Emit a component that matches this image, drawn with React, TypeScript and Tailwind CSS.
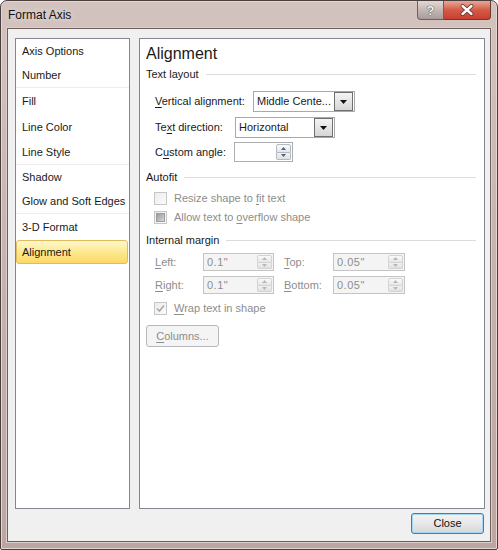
import React from "react";

const DIS = "text-[#8d8d8d]";

function U({ children }: { children: React.ReactNode }) {
  return <span className="underline underline-offset-[2px]">{children}</span>;
}

function Arrow({ dir, color }: { dir: "up" | "down"; color: string }) {
  return (
    <svg width="5" height="3" viewBox="0 0 5 3">
      {dir === "up" ? (
        <path d="M0 3 L2.5 0 L5 3 Z" fill={color} />
      ) : (
        <path d="M0 0 L2.5 3 L5 0 Z" fill={color} />
      )}
    </svg>
  );
}

function SpinBtns({ enabled }: { enabled: boolean }) {
  const arrow = enabled ? "#4d6185" : "#b8b8b8";
  const b = enabled ? "border-[#b4bac2]" : "border-[#d3d3d3]";
  return (
    <div className="flex flex-col w-[15px] h-full">
      <div
        className={`flex-1 flex items-center justify-center border ${b} rounded-t-[2px] bg-linear-to-b from-[#fafafa] to-[#e6e6e6]`}
      >
        <Arrow dir="up" color={arrow} />
      </div>
      <div
        className={`flex-1 flex items-center justify-center border border-t-0 ${b} rounded-b-[2px] bg-linear-to-b from-[#f2f2f2] to-[#e0e0e0]`}
      >
        <Arrow dir="down" color={arrow} />
      </div>
    </div>
  );
}

function SpinInput({ value, w }: { value: string; w: string }) {
  return (
    <div
      className={`flex h-[18px] ${w} border border-[#c4c4c4] bg-[#f4f4f4] items-stretch`}
    >
      <span className={`flex-1 flex items-center pl-[3px] ${DIS} tracking-[0.5px]`}>
        {value}
      </span>
      <div className="py-[1px] pr-[1px]">
        <SpinBtns enabled={false} />
      </div>
    </div>
  );
}

function Dropdown({ text, w }: { text: string; w: string }) {
  return (
    <div className={`flex h-[21px] ${w} border border-[#a9a9a9] bg-white items-stretch`}>
      <span className="flex-1 flex items-center pl-[3px] text-[#1a1a1a] whitespace-nowrap overflow-hidden">
        {text}
      </span>
      <div className="py-[0px] pr-[1px] flex">
        <div className="w-[19px] flex items-center justify-center border border-[#6f6f6f] bg-linear-to-b from-[#f4f4f4] to-[#d6d6d6]">
          <svg width="7" height="4" viewBox="0 0 7 4">
            <path d="M0 0 L7 0 L3.5 4 Z" fill="#111" />
          </svg>
        </div>
      </div>
    </div>
  );
}

function Checkbox({ state }: { state: "empty" | "mixed" | "checked" }) {
  return (
    <div className="w-[13px] h-[13px] border border-[#c6c6c6] bg-linear-to-br from-[#ececec] to-[#fbfbfb] flex items-center justify-center">
      {state === "mixed" && (
        <div className="w-[9px] h-[9px] border border-[#9d9d9d] bg-linear-to-br from-[#9a9a9a] to-[#d8d8d8]" />
      )}
      {state === "checked" && (
        <svg width="9" height="9" viewBox="0 0 9 9">
          <path d="M1 4.5 L3.5 7 L8 1.5" stroke="#a9a9a9" strokeWidth="1.6" fill="none" />
        </svg>
      )}
    </div>
  );
}

function Section({ title, mt }: { title: string; mt: string }) {
  return (
    <div className={`flex items-center h-[16px] ${mt}`}>
      <span className="text-[#1a1a1a]">{title}</span>
      <div className="flex-1 h-px bg-[#dcdcdc] ml-[7px] mr-[3px]" />
    </div>
  );
}

function NavItem({ label, h }: { label: string; h: string }) {
  return (
    <div className={`${h} flex items-center pl-[6px] text-[#1a1a1a]`}>{label}</div>
  );
}

function NavSep() {
  return <div className="h-px mx-0 bg-[#ececec]" />;
}

export default function App() {
  return (
    <div className="w-[498px] h-[550px] font-['Liberation_Sans',Arial,sans-serif] text-[11px] leading-none select-none">
      <div className="relative w-[498px] h-[550px] rounded-t-[7px] rounded-b-[2px] border border-[#4b3f3d] bg-linear-to-b from-[#d3c3bf] via-[#c6b2ae] to-[#bba6a1] shadow-[inset_0_0_0_1px_#e3d8d5]">
        {/* title bar */}
        <div className="h-[27px] flex items-center pl-[7px]">
          <span className="text-[12px] text-[#111] [text-shadow:0_0_6px_#f3ece9]">Format Axis</span>
        </div>
        <div className="absolute top-0 right-[6px] flex h-[19px]">
          <div className="w-[27px] h-full rounded-bl-[4px] border border-t-0 border-[#6d5f5d] bg-linear-to-b from-[#e2d8d6] via-[#c4b8b6] to-[#a89c9a] flex items-center justify-center">
            <span className="text-[13px] font-bold text-[#f4f4f4] [text-shadow:0_0_1px_#3a3a3a,0_0_1px_#3a3a3a]">?</span>
          </div>
          <div className="w-[47px] h-full rounded-br-[4px] border border-t-0 border-l-0 border-[#6b3a33] bg-linear-to-b from-[#e8a797] via-[#d45a48] to-[#c7402f] flex items-center justify-center">
            <svg width="14" height="12" viewBox="0 0 14 12">
              <path d="M2.5 2 L11.5 10 M11.5 2 L2.5 10" stroke="#5a2a22" strokeWidth="3.8" strokeLinecap="round" />
              <path d="M2.5 2 L11.5 10 M11.5 2 L2.5 10" stroke="#ffffff" strokeWidth="2.4" strokeLinecap="round" />
            </svg>
          </div>
        </div>

        {/* client area */}
        <div className="mx-[6px] h-[514px] border border-[#6e5f5c] bg-[#f0f0f0] pt-[9px] pl-[7px] pr-[5px] shadow-[0_0_0_1px_#dcd0cd]">
          <div className="flex h-[471px] gap-[9px]">
            {/* nav */}
            <div className="w-[115px] h-full bg-white border border-[#828790] flex flex-col">
              <NavItem label="Axis Options" h="h-[24px]" />
              <NavItem label="Number" h="h-[24px]" />
              <NavSep />
              <NavItem label="Fill" h="h-[26px]" />
              <NavItem label="Line Color" h="h-[26px]" />
              <NavItem label="Line Style" h="h-[24px]" />
              <NavSep />
              <NavItem label="Shadow" h="h-[24px]" />
              <NavItem label="Glow and Soft Edges" h="h-[24px]" />
              <NavSep />
              <NavItem label="3-D Format" h="h-[26px]" />
              <div className="h-[24px] mr-[1px] rounded-[3px] border border-[#e0bd5a] bg-linear-to-b from-[#fff8cc] via-[#fde88e] to-[#fcd964] flex items-center pl-[5px] text-[#1a1a1a]">
                Alignment
              </div>
            </div>

            {/* panel */}
            <div className="w-[346px] h-full bg-white border border-[#828790] flex flex-col pl-[6px] pr-[5px]">
              <div className="h-[20px] mt-[5px] flex items-center text-[16px] text-[#1a1a1a]">
                Alignment
              </div>
              <Section title="Text layout" mt="mt-[2px]" />

              <div className="flex items-center h-[21px] mt-[9px] pl-[9px]">
                <span className="w-[98px] text-[#1a1a1a]">
                  <U>V</U>ertical alignment:
                </span>
                <Dropdown text="Middle Cente..." w="w-[102px]" />
              </div>

              <div className="flex items-center h-[21px] mt-[5px] pl-[9px]">
                <span className="w-[80px] text-[#1a1a1a]">
                  Te<U>x</U>t direction:
                </span>
                <Dropdown text="Horizontal" w="w-[100px]" />
              </div>

              <div className="flex items-center h-[20px] mt-[4px] pl-[9px]">
                <span className="w-[79px] text-[#1a1a1a]">
                  C<U>u</U>stom angle:
                </span>
                <div className="flex h-[20px] w-[59px] border border-[#abadb3] bg-white items-stretch">
                  <span className="flex-1" />
                  <div className="py-[1px] pr-[1px]">
                    <SpinBtns enabled={true} />
                  </div>
                </div>
              </div>

              <Section title="Autofit" mt="mt-[7px]" />

              <div className={`flex items-center h-[16px] mt-[5px] pl-[8px] gap-[7px] ${DIS}`}>
                <Checkbox state="empty" />
                <span>
                  Resize shape to <U>f</U>it text
                </span>
              </div>
              <div className={`flex items-center h-[16px] mt-[3px] pl-[8px] gap-[7px] ${DIS}`}>
                <Checkbox state="mixed" />
                <span>
                  Allow text to <U>o</U>verflow shape
                </span>
              </div>

              <Section title="Internal margin" mt="mt-[7px]" />

              <div className={`flex items-center h-[18px] mt-[5px] pl-[9px] ${DIS}`}>
                <span className="w-[48px]">
                  <U>L</U>eft:
                </span>
                <SpinInput value={'0.1"'} w="w-[71px]" />
                <span className="w-[49px] ml-[10px]">
                  <U>T</U>op:
                </span>
                <SpinInput value={'0.05"'} w="w-[72px]" />
              </div>
              <div className={`flex items-center h-[18px] mt-[5px] pl-[9px] ${DIS}`}>
                <span className="w-[48px]">
                  <U>R</U>ight:
                </span>
                <SpinInput value={'0.1"'} w="w-[71px]" />
                <span className="w-[49px] ml-[10px]">
                  <U>B</U>ottom:
                </span>
                <SpinInput value={'0.05"'} w="w-[72px]" />
              </div>

              <div className={`flex items-center h-[16px] mt-[6px] pl-[8px] gap-[7px] ${DIS}`}>
                <Checkbox state="checked" />
                <span>
                  <U>W</U>rap text in shape
                </span>
              </div>

              <div className="mt-[9px]">
                <div className={`w-[73px] h-[22px] rounded-[3px] border border-[#b5b9bd] bg-[#f4f4f4] flex items-center justify-center ${DIS}`}>
                  <span>
                    <U>C</U>olumns...
                  </span>
                </div>
              </div>
            </div>
          </div>

          {/* bottom button row */}
          <div className="flex justify-end mt-[4px] pr-[1px]">
            <div className="w-[73px] h-[21px] rounded-[3px] border border-[#3c7fb1] bg-linear-to-b from-[#f3f3f3] via-[#e8e8e8] to-[#d6d6d6] flex items-center justify-center text-[#111] shadow-[inset_0_0_0_1px_#a6d6f0]">
              Close
            </div>
          </div>
        </div>
      </div>
    </div>
  );
}
